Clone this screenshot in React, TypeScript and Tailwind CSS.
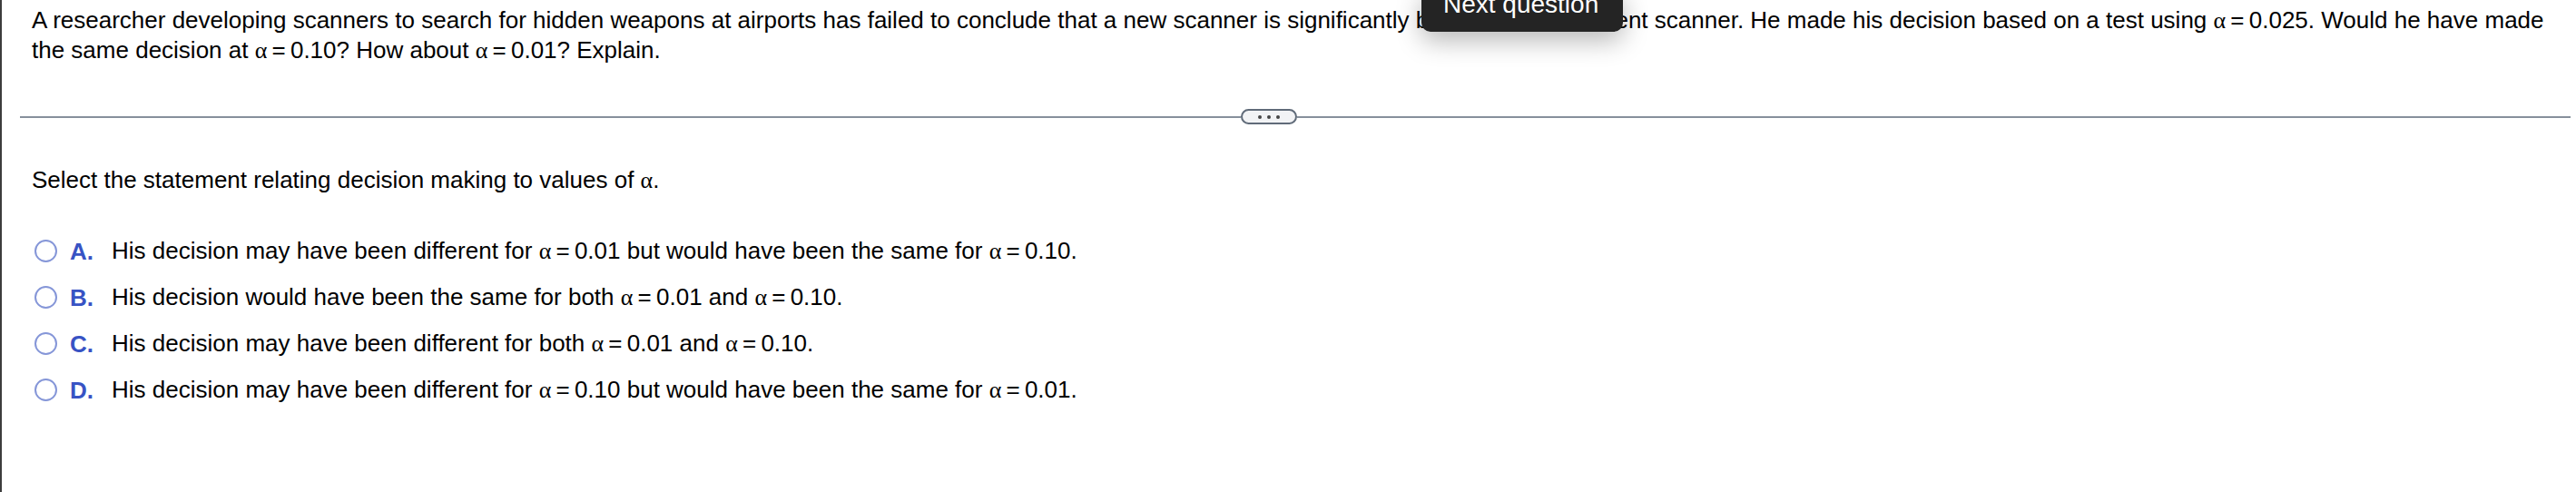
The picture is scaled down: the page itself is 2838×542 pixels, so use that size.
import React from "react";

const Alpha = () => <span className="font-['Liberation_Serif',serif]">α</span>;

// α = value, with the tight spacing the reference uses
const Eq = ({ v }: { v: string }) => (
  <>
    <Alpha />
    {"\u2009=\u2009"}
    {v}
  </>
);

const options: { key: string; text: React.ReactNode }[] = [
  {
    key: "A.",
    text: (
      <>
        His decision may have been different for <Eq v="0.01" /> but would have been the same for <Eq v="0.10." />
      </>
    ),
  },
  {
    key: "B.",
    text: (
      <>
        His decision would have been the same for both <Eq v="0.01" /> and <Eq v="0.10." />
      </>
    ),
  },
  {
    key: "C.",
    text: (
      <>
        His decision may have been different for both <Eq v="0.01" /> and <Eq v="0.10." />
      </>
    ),
  },
  {
    key: "D.",
    text: (
      <>
        His decision may have been different for <Eq v="0.10" /> but would have been the same for <Eq v="0.01." />
      </>
    ),
  },
];

export default function App() {
  return (
    <div className="relative w-[2838px] h-[542px] overflow-hidden bg-white border-l-2 border-[#3d3d3d] font-['Liberation_Sans',Arial,sans-serif] text-black text-[26px] leading-[32px]">
      {/* question */}
      <p className="pt-[6px] pl-[33px] whitespace-nowrap">
        A researcher developing scanners to search for hidden weapons at airports has failed to conclude that a new scanner is
        significantly better than the current scanner. He made his decision based on a test using <Eq v="0.025" />. Would he have made
        <br />
        the same decision at <Eq v="0.10" />? How about <Eq v="0.01" />? Explain.
      </p>

      {/* divider with expand pill */}
      <div className="mt-[48px] ml-[20px] mr-[6px] flex items-center h-[17px]">
        <div className="w-[1345px] h-[2px] bg-[#87909c]" />
        <div className="w-[62px] h-[17px] rounded-full border-2 border-[#606b79] bg-[#f2f3f5] flex items-center justify-center gap-[6px]">
          <span className="w-[4px] h-[4px] rounded-full bg-[#454545]" />
          <span className="w-[4px] h-[4px] rounded-full bg-[#454545]" />
          <span className="w-[4px] h-[4px] rounded-full bg-[#454545]" />
        </div>
        <div className="flex-1 h-[2px] bg-[#87909c]" />
      </div>

      <p className="mt-[45px] pl-[33px]">
        Select the statement relating decision making to values of <Alpha />.
      </p>

      <div className="mt-[45px] pl-[36px] flex flex-col gap-[18px]">
        {options.map((o) => (
          <div key={o.key} className="flex items-center whitespace-nowrap">
            <span className="w-[25px] h-[25px] rounded-full border-[2.5px] border-[#8596d8]" />
            <span className="ml-[14px] w-[46px] font-bold text-[#3853c4]">{o.key}</span>
            <span>{o.text}</span>
          </div>
        ))}
      </div>

      {/* tooltip overlay */}
      <div className="absolute left-[1564px] top-[-14px] w-[222px] h-[49px] rounded-[10px] bg-[#242424] shadow-[0_10px_28px_rgba(0,0,0,0.28)] pl-[24px] pt-[5px] text-white text-[28px] leading-[28px]">
        Next question
      </div>
    </div>
  );
}
